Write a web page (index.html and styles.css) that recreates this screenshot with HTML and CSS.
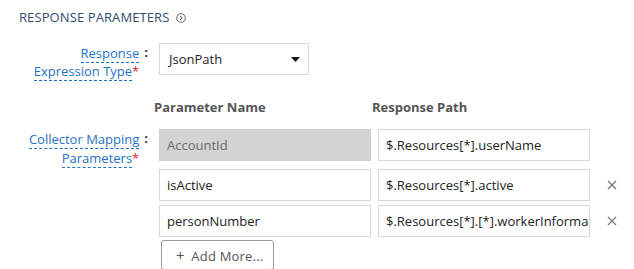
FILE: index.html
```html
<!DOCTYPE html>
<html lang="en">
<head>
<meta charset="utf-8">
<title>Response Parameters</title>
<link rel="stylesheet" href="styles.css">
</head>
<body>
<div class="section">
  <div class="section-title">RESPONSE PARAMETERS
    <svg class="info-icon" width="10" height="10" viewBox="0 0 10 10"><circle cx="5" cy="5" r="4.3" fill="none" stroke="#666" stroke-width="1"/><path d="M4.2 3 L6 5 L4.2 7" fill="none" stroke="#666" stroke-width="1.1"/></svg>
  </div>

  <div class="field field-select">
    <div class="label-cell">
      <div class="label-text"><span class="lbl">Response</span><br><span class="lbl">Expression Type</span><span class="req">*</span></div>
      <span class="colon">:</span>
    </div>
    <div class="select">
      <span>JsonPath</span>
      <svg class="caret" width="9" height="5" viewBox="0 0 9 5"><path d="M0 0 H9 L4.5 5 Z" fill="#111"/></svg>
    </div>
  </div>

  <div class="col-headers">
    <div class="col-head">Parameter Name</div>
    <div class="col-head">Response Path</div>
  </div>

  <div class="field field-map">
    <div class="label-cell">
      <div class="label-text"><span class="lbl">Collector Mapping</span><br><span class="lbl">Parameters</span><span class="req">*</span></div>
      <span class="colon">:</span>
    </div>
    <div class="rows">
      <div class="map-row first">
        <div class="box disabled">AccountId</div>
        <div class="box">$.Resources[*].userName</div>
      </div>
      <div class="map-row">
        <div class="box">isActive</div>
        <div class="box">$.Resources[*].active</div>
        <svg class="remove" width="10" height="10" viewBox="0 0 10 10"><path d="M1 1 L9 9 M9 1 L1 9" stroke="#7a7a7a" stroke-width="1.3"/></svg>
      </div>
      <div class="map-row">
        <div class="box">personNumber</div>
        <div class="box">$.Resources[*].[*].workerInformation.personNumber</div>
        <svg class="remove" width="10" height="10" viewBox="0 0 10 10"><path d="M1 1 L9 9 M9 1 L1 9" stroke="#7a7a7a" stroke-width="1.3"/></svg>
      </div>
      <button class="add-btn"><span class="plus">+</span> Add More...</button>
    </div>
  </div>
</div>
</body>
</html>
```

FILE: styles.css
```css
html, body {
  margin: 0;
  padding: 0;
  background: #fff;
}
body {
  font-family: "Open Sans", "Noto Sans", sans-serif;
  font-size: 13px;
  color: #333;
  width: 634px;
  height: 269px;
  overflow: hidden;
}
.section {
  padding-top: 8px;
}
.section-title {
  padding-left: 19px;
  line-height: 18px;
  color: #2f4d6e;
  font-size: 13px;
  letter-spacing: 0.1px;
  display: flex;
  align-items: center;
}
.info-icon {
  margin-left: 7px;
  margin-top: 1px;
}
.field {
  display: flex;
  align-items: flex-start;
}
.field-select {
  margin-top: 17px;
  height: 32px;
}
.label-cell {
  width: 149px;
  display: flex;
  justify-content: flex-end;
  align-items: flex-start;
  padding-top: 1px;
  flex: none;
}
.label-text {
  text-align: right;
  line-height: 18px;
  color: #1f73c4;
}
.field-map .label-text {
  line-height: 19px;
}
.lbl {
  border-bottom: 1px dashed #1f73c4;
}
.req {
  color: #e0202a;
}
.colon {
  margin-left: 5px;
  margin-right: 1px;
  line-height: 17px;
  color: #333;
  font-weight: 700;
}
.select {
  margin-left: 10px;
  width: 150px;
  height: 32px;
  box-sizing: border-box;
  border: 1px solid #d9d9d9;
  display: flex;
  align-items: center;
  justify-content: space-between;
  padding: 0 8px 0 9px;
  color: #222;
}
.caret {
  margin-top: 1px;
}
.col-headers {
  display: flex;
  margin-top: 23px;
  padding-left: 154px;
  line-height: 18px;
}
.col-head {
  font-weight: 700;
  color: #555;
  width: 218px;
}
.field-map {
  margin-top: 13px;
}
.rows {
  margin-left: 10px;
  display: flex;
  flex-direction: column;
}
.map-row {
  display: flex;
  align-items: center;
  gap: 7px;
  margin-bottom: 4px;
}
.map-row.first {
  margin-bottom: 8px;
}
.box {
  width: 212px;
  height: 32px;
  box-sizing: border-box;
  border: 1px solid #d9d9d9;
  padding: 0 7px;
  line-height: 30px;
  white-space: nowrap;
  overflow: hidden;
  color: #222;
  background: #fff;
}
.box.disabled {
  background: #d4d4d4;
  border-color: #cfcfcf;
  color: #6a6a6a;
}
.remove {
  margin-left: 10px;
}
.add-btn {
  margin-top: -1px;
  margin-left: 2px;
  width: 113px;
  height: 30px;
  box-sizing: border-box;
  border: 1px solid #9a9a9a;
  border-radius: 3px;
  background: #fff;
  font-family: "Open Sans", "Noto Sans", sans-serif;
  font-size: 13px;
  color: #555;
  text-align: left;
  padding: 0 0 0 14px;
  letter-spacing: 0.2px;
}
.plus {
  font-size: 15px;
  margin-right: 3px;
}
```
